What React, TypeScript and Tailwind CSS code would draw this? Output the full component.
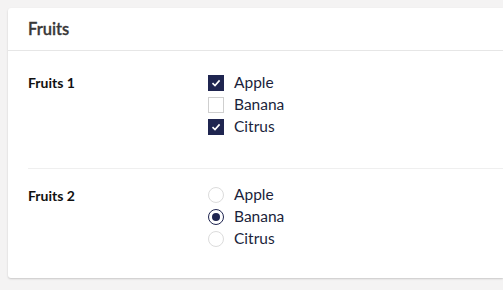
import React from "react";

const options = ["Apple", "Banana", "Citrus"];

function Check({ checked }: { checked: boolean }) {
  return checked ? (
    <span className="w-4 h-4 flex items-center justify-center bg-[#1f2550] border border-[#1f2550]">
      <svg width="10" height="10" viewBox="0 0 10 10">
        <path d="M1.5 5.2 L4 7.6 L8.6 2.4" fill="none" stroke="#fff" strokeWidth="1.6" />
      </svg>
    </span>
  ) : (
    <span className="w-4 h-4 bg-white border border-[#cfcfcf]" />
  );
}

function Radio({ checked }: { checked: boolean }) {
  return checked ? (
    <span className="w-4 h-4 rounded-full border-[1.5px] border-[#1f2550] flex items-center justify-center bg-white">
      <span className="w-2 h-2 rounded-full bg-[#1f2550]" />
    </span>
  ) : (
    <span className="w-4 h-4 rounded-full border border-[#dcdcdc] bg-white" />
  );
}

export default function App() {
  const checked = ["Apple", "Citrus"];
  return (
    <div className="min-h-screen bg-[#f4f3f3] pt-2 pl-2 font-['Lato',sans-serif] overflow-hidden">
      <div className="bg-white rounded-tl-[3px] rounded-bl-[3px] shadow-[0_1px_2px_rgba(0,0,0,0.18)] h-[270px]">
        <div className="h-[43px] flex items-center px-5 border-b border-[#e6e6e6]">
          <span className="text-[16.5px] font-semibold text-[#383838] [-webkit-text-stroke:0.3px_#383838]">Fruits</span>
        </div>
        <div className="pl-5">
          <div className="flex pt-6 pb-[33px] border-b border-[#efefef]">
            <div className="w-[180px] text-[14px] font-bold text-[#111] leading-[15px]">Fruits 1</div>
            <div className="flex flex-col gap-[6px]">
              {options.map((o) => (
                <div key={o} className="flex items-center gap-[10px] h-4">
                  <Check checked={checked.includes(o)} />
                  <span className="text-[15.5px] text-[#1b1f3b]">{o}</span>
                </div>
              ))}
            </div>
          </div>
          <div className="flex pt-[18px]">
            <div className="w-[180px] text-[14px] font-bold text-[#111] leading-[17px]">Fruits 2</div>
            <div className="flex flex-col gap-[6px]">
              {options.map((o) => (
                <div key={o} className="flex items-center gap-[10px] h-4">
                  <Radio checked={o === "Banana"} />
                  <span className="text-[15.5px] text-[#1b1f3b]">{o}</span>
                </div>
              ))}
            </div>
          </div>
        </div>
      </div>
    </div>
  );
}
